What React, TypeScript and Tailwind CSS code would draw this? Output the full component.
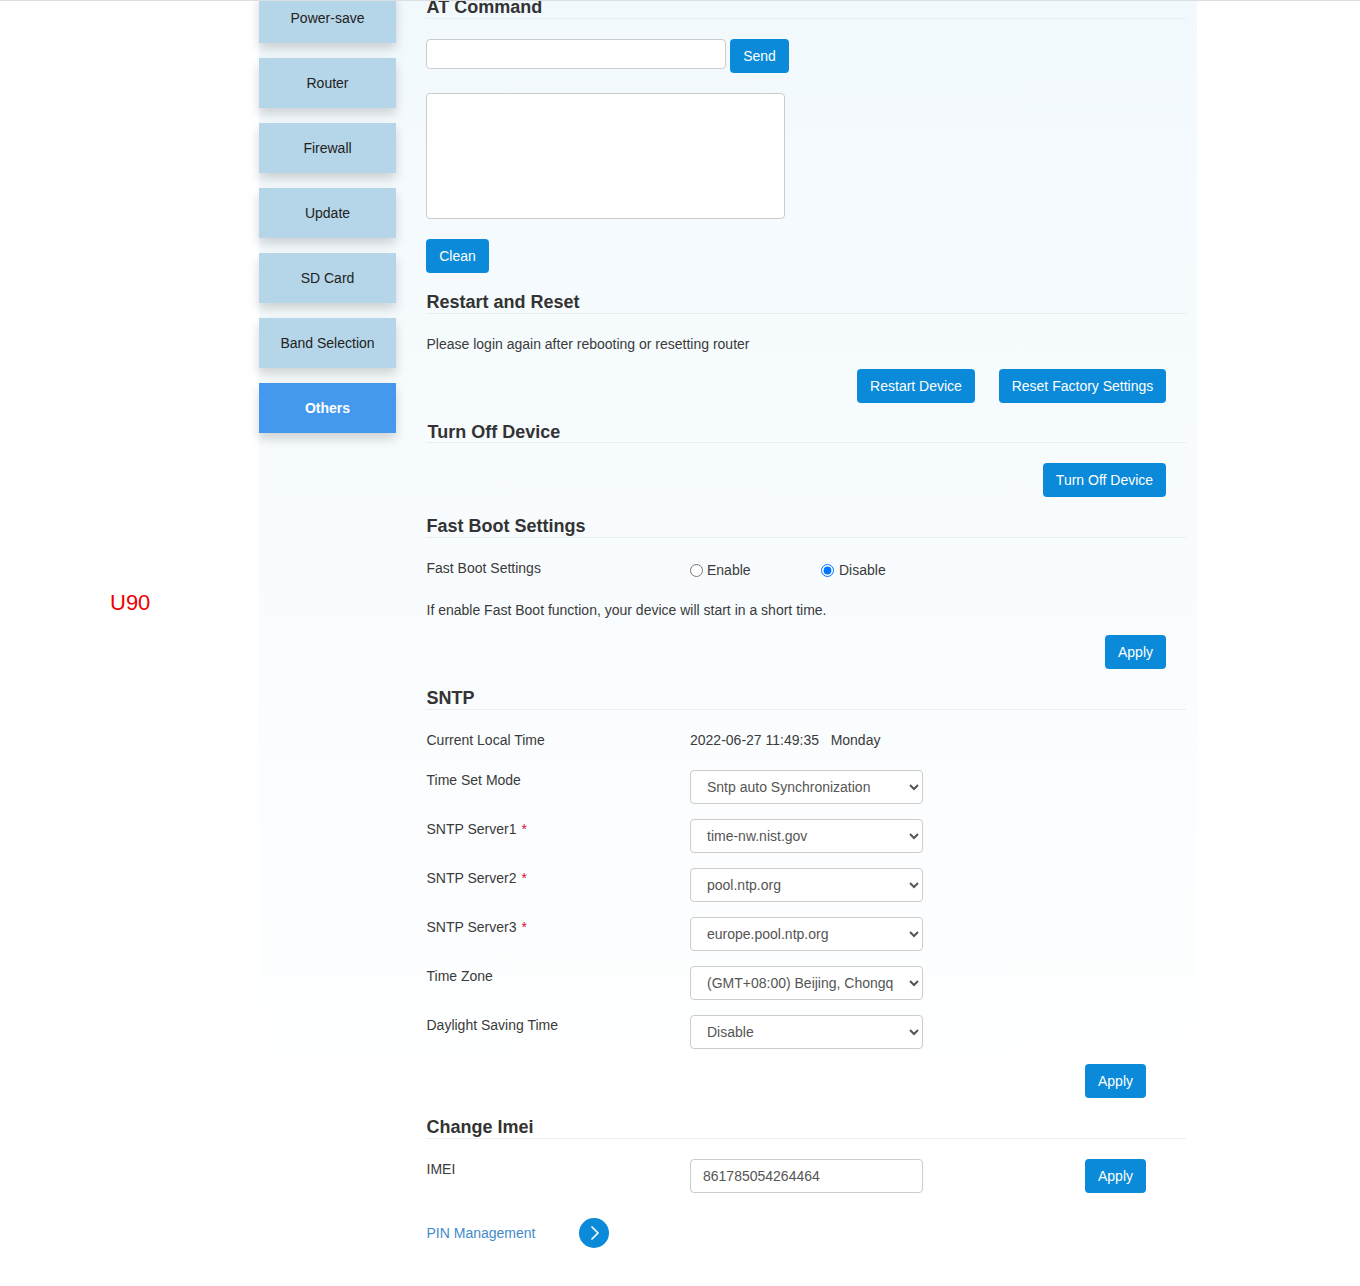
import React from 'react';
import { ChevronRight } from 'lucide-react';

const menuItems = ['Power-save', 'Router', 'Firewall', 'Update', 'SD Card', 'Band Selection'];

const sntpRows = [
  { label: 'Time Set Mode', value: 'Sntp auto Synchronization' },
  { label: 'SNTP Server1', value: 'time-nw.nist.gov', required: true },
  { label: 'SNTP Server2', value: 'pool.ntp.org', required: true },
  { label: 'SNTP Server3', value: 'europe.pool.ntp.org', required: true },
  { label: 'Time Zone', value: '(GMT+08:00) Beijing, Chongqing, Hong Kong, Urumqi' },
  { label: 'Daylight Saving Time', value: 'Disable' },
];

const Heading: React.FC<{ title: string; className?: string; indent?: string; lift?: string }> = ({
  title,
  className = '',
  indent = 'pl-[0.5px]',
  lift = 'pt-px',
}) => (
  <div className={`h-[26px] border-b border-[#e9eef1] text-[18px] font-bold leading-[26px] text-[#333] ${indent} ${lift} ${className}`}>
    {title}
  </div>
);

const Btn: React.FC<{ children: React.ReactNode; className?: string }> = ({ children, className = '' }) => (
  <button type="button" className={`h-[34px] rounded-[4px] bg-[#0a8ad9] text-center text-[14px] leading-[34px] text-white ${className}`}>
    {children}
  </button>
);

export default function App() {
  return (
    <div className="flex h-[1286px] overflow-hidden border-t border-[#dcdfe1] bg-white font-['Liberation_Sans',Arial,sans-serif] text-[14px] text-[#3a3a3a]">
      <div className="w-[259px] shrink-0 pl-[110px] pt-[589px] text-[22px] leading-[26px] text-[#f00000]">U90</div>

      <div className="flex w-[938px] shrink-0 bg-gradient-to-b from-[#f2f9fd] to-white to-[90%]">
        <div className="-mt-[8px] flex w-[137px] shrink-0 flex-col gap-[15px]">
          {menuItems.map(item => (
            <div
              key={item}
              className="h-[50px] bg-[#b5d5e8] text-center leading-[50px] text-[#222] shadow-[0_6px_10px_rgba(0,0,0,0.16)]"
            >
              {item}
            </div>
          ))}
          <div className="h-[50px] bg-[#4499ee] text-center font-bold leading-[50px] text-white shadow-[0_6px_10px_rgba(0,0,0,0.16)]">
            Others
          </div>
        </div>

        <div className="-mt-[8px] ml-[30px] w-[760px] shrink-0">
          <Heading title="AT Command" />
          <div className="mt-[20px] flex items-start gap-[4px]">
            <input className="h-[30px] w-[300px] rounded-[4px] border border-[#ccc] bg-white outline-none" />
            <Btn className="w-[59px]">Send</Btn>
          </div>
          <textarea className="mt-[20px] block h-[126px] w-[359px] resize-none rounded-[4px] border border-[#ccc] bg-white outline-none" />
          <Btn className="mt-[20px] block w-[63px]">Clean</Btn>

          <Heading title="Restart and Reset" className="mt-[15px]" />
          <p className="mt-[20px] h-[20px] pl-[0.5px] leading-[20px]">Please login again after rebooting or resetting router</p>
          <div className="mt-[15px] flex justify-end gap-[24px] pr-[20px]">
            <Btn className="w-[118px]">Restart Device</Btn>
            <Btn className="w-[167px]">Reset Factory Settings</Btn>
          </div>

          <Heading title="Turn Off Device" className="mt-[14px]" indent="pl-[1.5px]" lift="pt-[2px]" />
          <div className="mt-[20px] flex justify-end pr-[20px]">
            <Btn className="w-[123px]">Turn Off Device</Btn>
          </div>

          <Heading title="Fast Boot Settings" className="mt-[15px]" />
          <div className="mt-[20px] flex h-[20px] items-start pl-[0.5px] leading-[20px]">
            <span className="w-[263.5px] shrink-0">Fast Boot Settings</span>
            <label className="mt-[2px] flex w-[131px] items-center gap-[4px]">
              <input type="radio" name="fastboot" className="m-0 h-[13px] w-[13px]" />
              Enable
            </label>
            <label className="mt-[2px] flex items-center gap-[5px]">
              <input type="radio" name="fastboot" defaultChecked className="m-0 h-[13px] w-[13px]" />
              Disable
            </label>
          </div>
          <p className="mt-[22px] h-[20px] pl-[0.5px] leading-[20px]">If enable Fast Boot function, your device will start in a short time.</p>
          <div className="mt-[15px] flex justify-end pr-[20px]">
            <Btn className="w-[61px]">Apply</Btn>
          </div>

          <Heading title="SNTP" className="mt-[15px]" />
          <div className="mt-[20px] flex h-[20px] pl-[0.5px] leading-[20px]">
            <span className="w-[263.5px] shrink-0">Current Local Time</span>
            <span className="whitespace-pre">2022-06-27 11:49:35   Monday</span>
          </div>
          <div className="mt-[20px] flex flex-col gap-[15px]">
            {sntpRows.map(row => (
              <div key={row.label} className="flex h-[34px] pl-[0.5px]">
                <span className="w-[263.5px] shrink-0 leading-[20px]">
                  {row.label}
                  {row.required && <span className="ml-[5px] text-[#e0103a]">*</span>}
                </span>
                <select
                  defaultValue={row.value}
                  className="h-[34px] w-[233px] rounded-[4px] border border-[#ccc] bg-white pl-[12px] pr-[13px] text-[14px] text-[#555] outline-none"
                >
                  <option>{row.value}</option>
                </select>
              </div>
            ))}
          </div>
          <div className="mt-[15px] flex justify-end pr-[40px]">
            <Btn className="w-[61px]">Apply</Btn>
          </div>

          <Heading title="Change Imei" className="mt-[15px]" />
          <div className="mt-[20px] flex h-[34px] pl-[0.5px]">
            <span className="w-[263.5px] shrink-0 leading-[20px]">IMEI</span>
            <input
              defaultValue="861785054264464"
              className="h-[34px] w-[233px] rounded-[4px] border border-[#ccc] bg-white px-[12px] text-[14px] text-[#555] outline-none"
            />
            <Btn className="ml-[162px] w-[61px]">Apply</Btn>
          </div>

          <div className="mt-[25px] flex h-[30px] items-center pl-[0.5px]">
            <span className="w-[152.5px] shrink-0 text-[#428bca]">PIN Management</span>
            <span className="flex h-[30px] w-[30px] items-center justify-center rounded-full bg-[#0a8ad9] text-white">
              <ChevronRight size={24} strokeWidth={1.75} className="ml-[2px]" />
            </span>
          </div>
        </div>
      </div>
    </div>
  );
}
